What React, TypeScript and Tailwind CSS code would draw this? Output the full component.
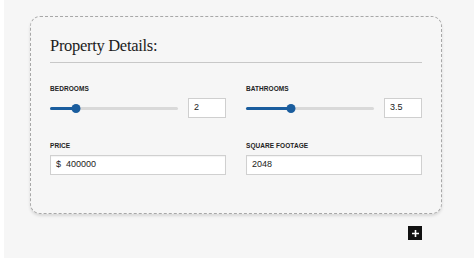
import React from "react";

function Slider({ pct }: { pct: number }) {
  return (
    <div className="relative h-[10px] flex-1 flex items-center">
      <div className="h-[3px] w-full rounded-full bg-[#d9d9d9]" />
      <div
        className="absolute left-0 h-[3px] rounded-full bg-[#1a5d9e]"
        style={{ width: `${pct}%` }}
      />
      <div
        className="absolute h-[9px] w-[9px] -translate-x-1/2 rounded-full bg-[#1a5d9e]"
        style={{ left: `${pct}%` }}
      />
    </div>
  );
}

function Label({ children }: { children: React.ReactNode }) {
  return (
    <div className="h-[7px] text-[6.5px] font-bold tracking-[0.01em] text-[#222] leading-none">
      {children}
    </div>
  );
}

export default function App() {
  return (
    <div
      className="h-[265px] w-[474px] bg-white"
      style={{ fontFamily: '"Liberation Sans", Arial, sans-serif' }}
    >
      <div className="ml-[4px] h-[258px] bg-[#f6f6f6] pt-[16px] pl-[26px] pr-[28px]">
        <div className="w-[412px] h-[198px] rounded-[10px] border border-dashed border-[#a8a8a8] bg-[#f6f6f6] px-[19px] pt-[18px] shadow-[0_2px_3px_rgba(0,0,0,0.12)]">
          <div
            className="text-[16.5px] leading-[22px] tracking-[-0.3px] text-[#1c1c1c]"
            style={{ fontFamily: '"Liberation Serif", "Times New Roman", serif' }}
          >
            Property Details:
          </div>
          <div className="mt-[5px] h-[1px] bg-[#c8c8c8]" />
          <div className="mt-[23px] grid grid-cols-2 gap-x-[20px]">
            <div>
              <Label>BEDROOMS</Label>
              <div className="mt-[5px] flex items-center gap-[10px]">
                <Slider pct={20} />
                <div className="flex h-[20px] w-[38px] items-center border border-[#cfcfcf] bg-white px-[5px] text-[9px] text-[#222]">
                  2
                </div>
              </div>
            </div>
            <div>
              <Label>BATHROOMS</Label>
              <div className="mt-[5px] flex items-center gap-[10px]">
                <Slider pct={35} />
                <div className="flex h-[20px] w-[38px] items-center border border-[#cfcfcf] bg-white px-[5px] text-[9px] text-[#222]">
                  3.5
                </div>
              </div>
            </div>
            <div className="mt-[25px]">
              <Label>PRICE</Label>
              <div className="mt-[5px] flex h-[20px] items-center border border-[#d0d0d0] bg-white px-[5px] text-[9px] text-[#222] shadow-[inset_0_1px_1px_rgba(0,0,0,0.05)]">
                $&nbsp;&nbsp;400000
              </div>
            </div>
            <div className="mt-[25px]">
              <Label>SQUARE FOOTAGE</Label>
              <div className="mt-[5px] flex h-[20px] items-center border border-[#d0d0d0] bg-white px-[5px] text-[9px] text-[#222] shadow-[inset_0_1px_1px_rgba(0,0,0,0.05)]">
                2048
              </div>
            </div>
          </div>
        </div>
        <div className="mt-[12px] flex justify-end pr-[24px]">
          <div className="flex h-[14px] w-[14px] items-center justify-center bg-[#111]">
            <svg width="9" height="9" viewBox="0 0 9 9">
              <path d="M4.5 1v7M1 4.5h7" stroke="#fff" strokeWidth="1.6" />
            </svg>
          </div>
        </div>
      </div>
    </div>
  );
}
